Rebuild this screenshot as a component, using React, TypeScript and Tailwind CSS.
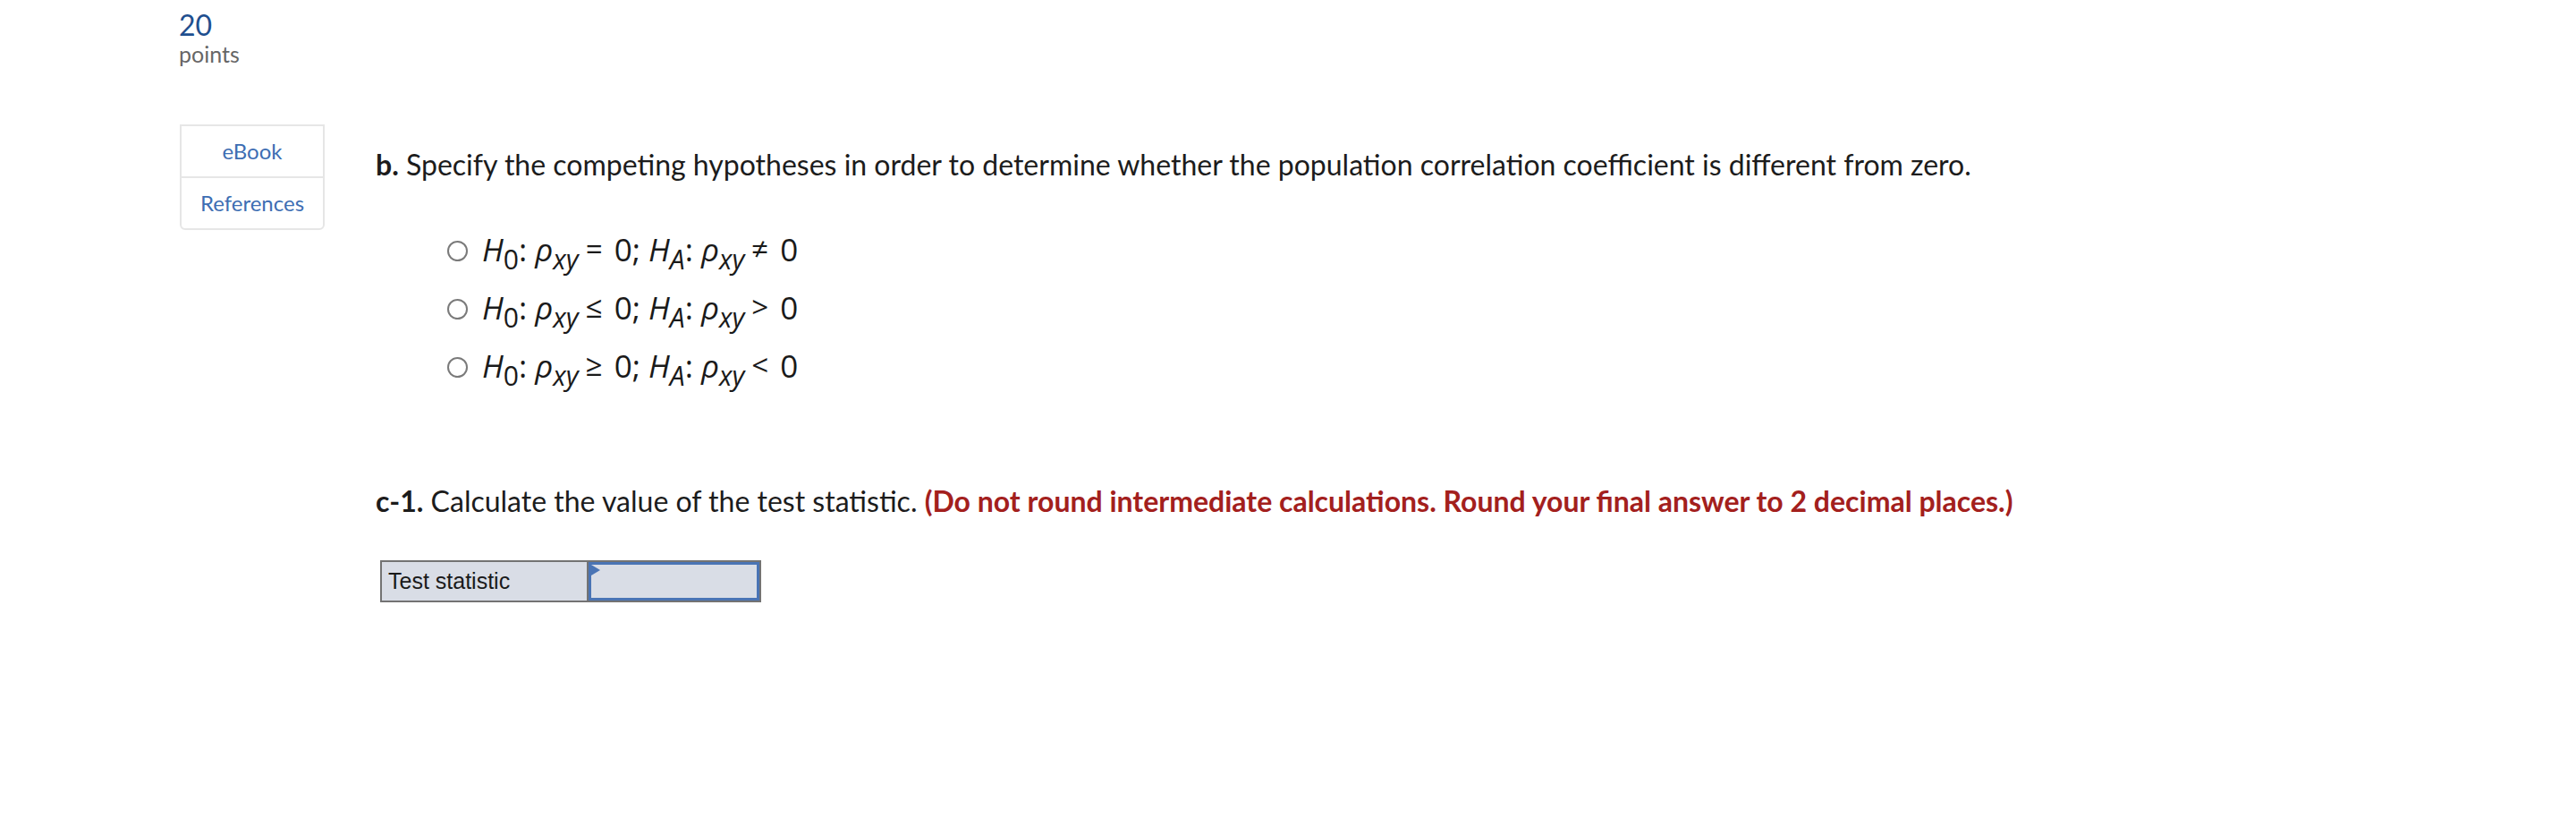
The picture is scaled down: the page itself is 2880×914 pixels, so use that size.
import React from 'react';

const sans = "font-['Lato','Open_Sans','DejaVu_Sans',sans-serif]";

function Sub({ children, italic = false }: { children: React.ReactNode; italic?: boolean }) {
  return (
    <span className={`relative top-[0.3em] text-[0.86em] ${italic ? 'italic' : ''}`}>{children}</span>
  );
}

function Rel({ children }: { children: React.ReactNode }) {
  return <span className="relative -top-[0.06em] pl-[8px] pr-[13px] text-[0.95em]">{children}</span>;
}

function Hyp({ h0, ha }: { h0: string; ha: string }) {
  return (
    <span className="whitespace-nowrap">
      <i>H</i>
      <Sub>0</Sub>: <i>ρ</i>
      <Sub italic>xy</Sub>
      <Rel>{h0}</Rel>0; <i>H</i>
      <Sub italic>A</Sub>: <i>ρ</i>
      <Sub italic>xy</Sub>
      <Rel>{ha}</Rel>0
    </span>
  );
}

const options = [
  { h0: '=', ha: '≠' },
  { h0: '≤', ha: '>' },
  { h0: '≥', ha: '<' },
];

export default function App() {
  return (
    <div className={`min-h-[914px] w-[2880px] bg-white text-[#1c1c1c] ${sans}`}>
      <div className="pl-[200px] pt-[10px]">
        <div className="text-[32px] leading-[36px] text-[#1f4f8f]">20</div>
        <div className="text-[25px] leading-[28px] text-[#666666]">points</div>
      </div>

      <div className="flex pl-[201px] pt-[65px]">
        <div className="w-[162px] shrink-0 self-start rounded-b-[6px] border-2 border-[#e6e6e6] text-[24px] text-[#3d6eb3]">
          <div className="flex h-[58px] items-center justify-center border-b-2 border-[#e6e6e6]">eBook</div>
          <div className="flex h-[56px] items-center justify-center">References</div>
        </div>

        <div className="ml-[57px] pt-[25px]">
          <p className="text-[32px] leading-[40px]">
            <b>b.</b> Specify the competing hypotheses in order to determine whether the population correlation
            coefficient is different from zero.
          </p>

          <div className="mt-[55px] flex flex-col gap-[23px] pl-[80px]">
            {options.map((o, i) => (
              <label
                key={i}
                className="flex items-center gap-[16px] font-['Open_Sans','DejaVu_Sans',sans-serif] text-[35px] leading-[40px] text-[#1a1a1a]"
              >
                <span className="h-[23px] w-[23px] shrink-0 rounded-full border-2 border-[#7a7a7a] bg-white" />
                <Hyp h0={o.h0} ha={o.ha} />
              </label>
            ))}
          </div>

          <p className="mt-[109px] text-[32px] leading-[40px]">
            <b>c-1.</b> Calculate the value of the test statistic.{' '}
            <b className="text-[#a3201d]">
              (Do not round intermediate calculations. Round your final answer to 2 decimal places.)
            </b>
          </p>

          <div className="mt-[46px] ml-[5px] flex w-[426px] border-2 border-[#737373] bg-[#d9dde6] font-['Liberation_Sans',Arial,sans-serif]">
            <div className="flex h-[43px] w-[231px] items-center border-r-2 border-[#737373] pl-[7px] text-[25px] text-[#1a1a1a]">
              Test statistic
            </div>
            <div className="relative flex-1 border-[3px] border-[#4a74b5] bg-[#d9dde6]">
              <span className="absolute left-0 top-0 h-0 w-0 border-y-[6px] border-l-[10px] border-y-transparent border-l-[#4a74b5]" />
            </div>
          </div>
        </div>
      </div>
    </div>
  );
}
